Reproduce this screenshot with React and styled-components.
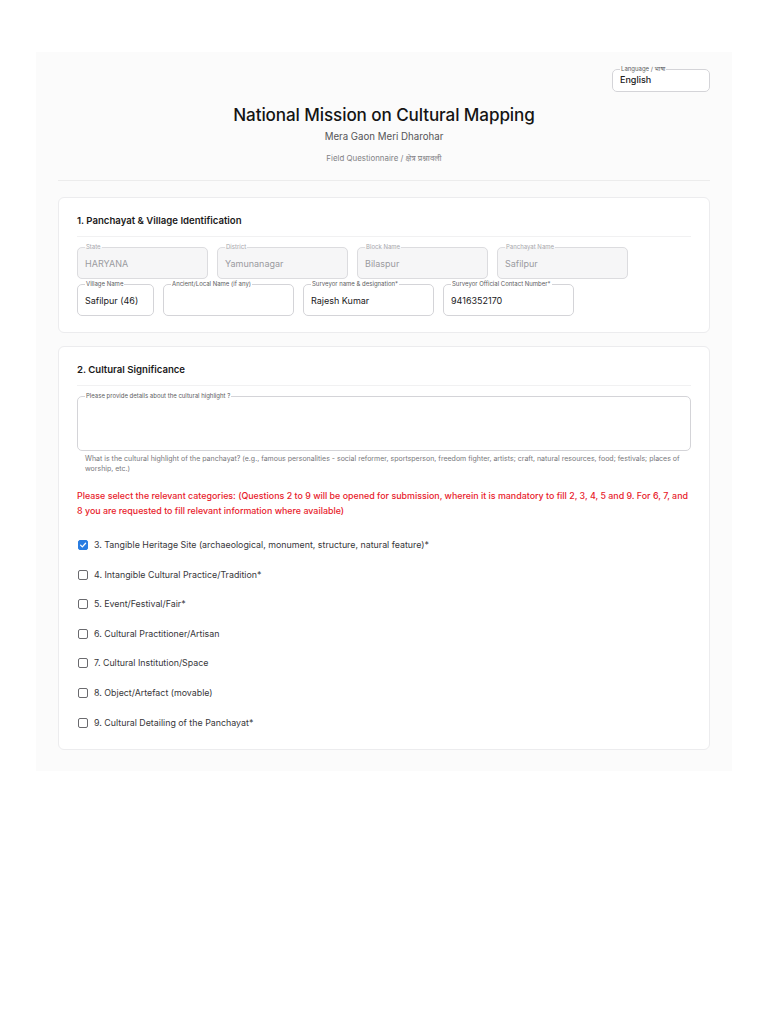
import React from "react";
import styled, { createGlobalStyle } from "styled-components";

const Global = createGlobalStyle`
  html, body { margin: 0; padding: 0; background: #ffffff; }
  body { font-family: Inter, "Noto Sans", "Liberation Sans", sans-serif; color: #1f1f1f; }
  * { box-sizing: border-box; }
`;

const Panel = styled.div`
  margin: 52px 36px 0;
  background: #fbfbfb;
  padding: 14px 22px 21px;
`;

const LangRow = styled.div`
  display: flex;
  justify-content: flex-end;
  align-self: stretch;
`;

const Field = styled.fieldset`
  margin: 0;
  padding: 0 7px ${(p) => p.$pb || "8px"};
  border: 1px solid ${(p) => (p.$disabled ? "#dcdcdf" : "#d4d4d8")};
  border-radius: 5px;
  background: ${(p) => (p.$disabled ? "#f6f6f7" : "#ffffff")};
  width: ${(p) => p.$w || "auto"};
  height: ${(p) => p.$h || "auto"};
  min-width: 0;
`;

const Legend = styled.legend`
  font-size: 6px;
  line-height: 6px;
  color: ${(p) => (p.$muted ? "#a8a8ad" : "#5c5c60")};
  padding: 0 1px;
  margin-left: 0;
`;

const Value = styled.div`
  font-size: 9px;
  line-height: 12px;
  padding-top: ${(p) => p.$pt || "8px"};
  color: ${(p) => (p.$disabled ? "#9b9ba0" : "#202022")};
  font-weight: ${(p) => (p.$strong ? 500 : 400)};
`;

const Header = styled.header`
  display: flex;
  flex-direction: column;
  align-items: center;
  padding-bottom: 16px;
  border-bottom: 1px solid #ececec;
`;

const Title = styled.h1`
  margin: 13px 0 0;
  font-size: 17.1px;
  line-height: 20px;
  font-weight: 500;
  color: #141414;
  letter-spacing: -0.1px;
`;

const Subtitle = styled.div`
  margin-top: 5px;
  font-size: 9.7px;
  line-height: 14px;
  color: #555558;
`;

const Small = styled.div`
  margin-top: 8px;
  font-size: 7.9px;
  line-height: 12px;
  color: #828286;
  font-family: Inter, "Noto Sans Devanagari", "Noto Sans", sans-serif;
`;

const Card = styled.section`
  margin-top: ${(p) => p.$mt || "16px"};
  background: #ffffff;
  border: 1px solid #ececee;
  border-radius: 6px;
  padding: 16px 18px;
`;

const CardTitle = styled.h2`
  margin: 0;
  font-size: 9.6px;
  line-height: 14px;
  font-weight: 600;
  color: #1a1a1a;
  padding-bottom: 8px;
  border-bottom: 1px solid #f1f1f2;
`;

const Rows = styled.div`
  display: flex;
  flex-direction: column;
  gap: 2px;
  margin-top: 7px;
`;

const Row = styled.div`
  display: flex;
  gap: 9px;
`;

const Area = styled.div`
  margin-top: 7px;
`;

const Helper = styled.p`
  margin: 3px 0 0;
  padding: 0 8px;
  font-size: 7px;
  line-height: 9.7px;
  color: #77777b;
`;

const Notice = styled.p`
  margin: 16px 0 0;
  font-size: 8.9px;
  line-height: 14.3px;
  font-weight: 500;
  color: #e8202a;
`;

const List = styled.div`
  display: flex;
  flex-direction: column;
  gap: 17.6px;
  margin-top: 21px;
  padding-bottom: 4px;
`;

const Item = styled.label`
  display: flex;
  align-items: center;
  gap: 6px;
  font-size: 8.85px;
  line-height: 12px;
  color: #38383b;
  padding-left: 1px;
`;

const Box = styled.span`
  width: 10px;
  height: 10px;
  flex: none;
  border-radius: 2px;
  border: 1.2px solid ${(p) => (p.$on ? "#2a7de1" : "#6a6a6e")};
  background: ${(p) => (p.$on ? "#2a7de1" : "#ffffff")};
  display: flex;
  align-items: center;
  justify-content: center;
`;

const Check = () => (
  <svg width="8" height="8" viewBox="0 0 10 10">
    <path d="M2 5.2 L4.2 7.3 L8.2 2.8" fill="none" stroke="#fff" strokeWidth="1.6" strokeLinecap="round" strokeLinejoin="round" />
  </svg>
);

const Input = ({ label, value, w, disabled }) => (
  <Field $w={w} $disabled={disabled}>
    <Legend $muted={disabled}>{label}</Legend>
    <Value $disabled={disabled}>{value || "\u00a0"}</Value>
  </Field>
);

const cats = [
  ["3. Tangible Heritage Site (archaeological, monument, structure, natural feature)*", true],
  ["4. Intangible Cultural Practice/Tradition*", false],
  ["5. Event/Festival/Fair*", false],
  ["6. Cultural Practitioner/Artisan", false],
  ["7. Cultural Institution/Space", false],
  ["8. Object/Artefact (movable)", false],
  ["9. Cultural Detailing of the Panchayat*", false],
];

export default function App() {
  return (
    <>
      <Global />
      <Panel>
        <Header>
          <LangRow>
            <Field $w="98px" $pb="5px">
              <Legend>Language / भाषा</Legend>
              <Value $strong $pt="2px">English</Value>
            </Field>
          </LangRow>
          <Title>National Mission on Cultural Mapping</Title>
          <Subtitle>Mera Gaon Meri Dharohar</Subtitle>
          <Small>Field Questionnaire / क्षेत्र प्रश्नावली</Small>
        </Header>

        <Card>
          <CardTitle>1. Panchayat &amp; Village Identification</CardTitle>
          <Rows>
            <Row>
              <Input label="State" value="HARYANA" w="131px" disabled />
              <Input label="District" value="Yamunanagar" w="131px" disabled />
              <Input label="Block Name" value="Bilaspur" w="131px" disabled />
              <Input label="Panchayat Name" value="Safilpur" w="131px" disabled />
            </Row>
            <Row>
              <Input label="Village Name" value="Safilpur (46)" w="77px" />
              <Input label="Ancient/Local Name (if any)" value="" w="131px" />
              <Input label="Surveyor name & designation*" value="Rajesh Kumar" w="131px" />
              <Input label="Surveyor Official Contact Number*" value="9416352170" w="131px" />
            </Row>
          </Rows>
        </Card>

        <Card $mt="13px">
          <CardTitle>2. Cultural Significance</CardTitle>
          <Area>
            <Field $h="58px">
              <Legend>Please provide details about the cultural highlight ?</Legend>
            </Field>
            <Helper>
              What is the cultural highlight of the panchayat? (e.g., famous personalities - social reformer, sportsperson, freedom fighter, artists; craft, natural resources, food; festivals; places of worship, etc.)
            </Helper>
          </Area>
          <Notice>
            Please select the relevant categories: (Questions 2 to 9 will be opened for submission, wherein it is mandatory to fill 2, 3, 4, 5 and 9. For 6, 7, and 8 you are requested to fill relevant information where available)
          </Notice>
          <List>
            {cats.map(([t, on]) => (
              <Item key={t}>
                <Box $on={on}>{on && <Check />}</Box>
                {t}
              </Item>
            ))}
          </List>
        </Card>
      </Panel>
    </>
  );
}
